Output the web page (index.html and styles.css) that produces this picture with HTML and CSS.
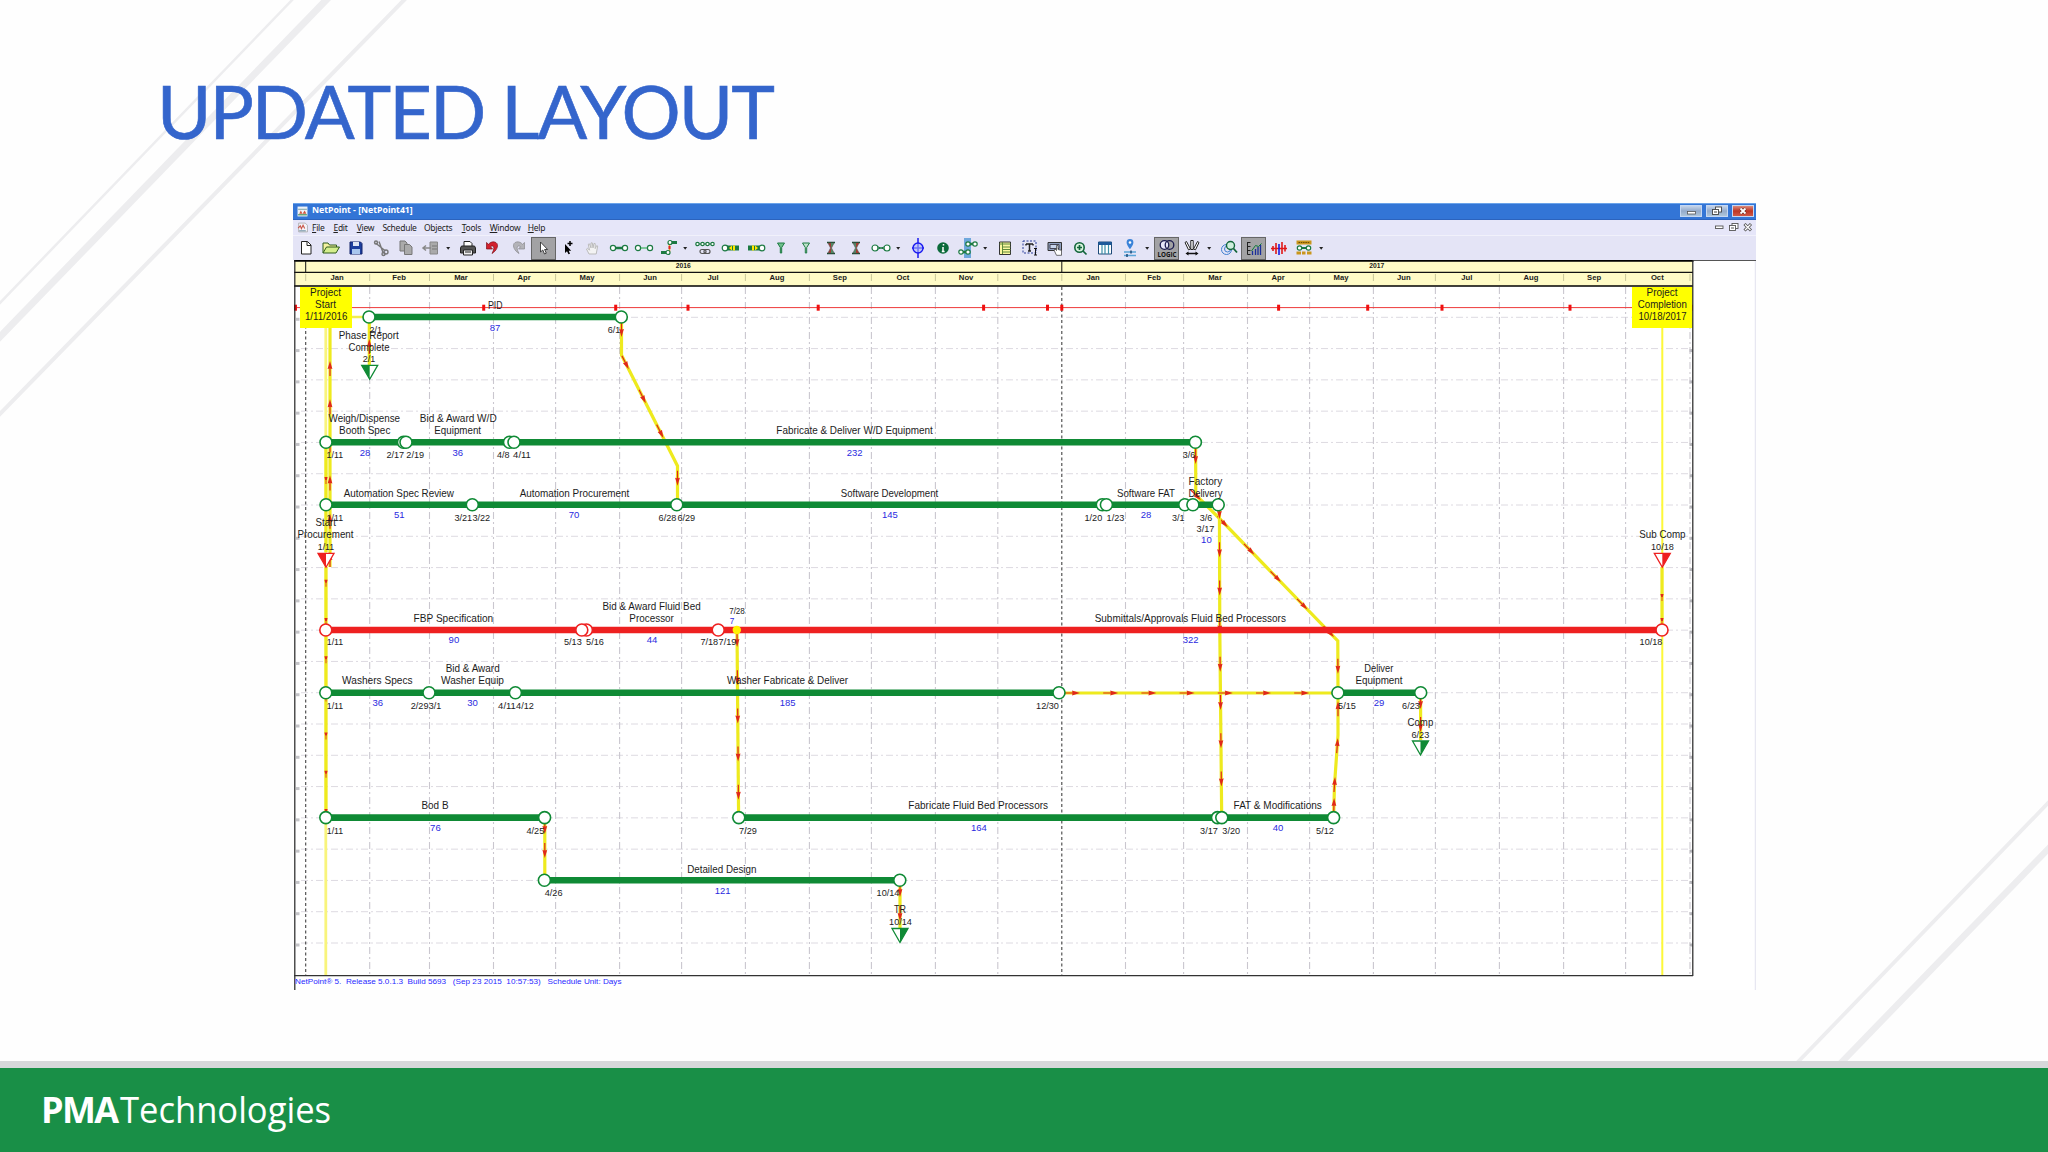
FILE: index.html
```html
<!DOCTYPE html>
<html lang="en">
<head>
    <meta charset="UTF-8">
    <meta name="viewport" content="width=device-width, initial-scale=1.0">
    <title>Updated Layout</title>
    <link rel="stylesheet" href="styles.css">
</head>
<body>
    <div class="slide">
        <svg class="decor" viewBox="0 0 2048 1061">
            <line x1="295" y1="-3" x2="-3" y2="306" stroke-width="2.5"/>
            <line x1="331" y1="-5" x2="-5" y2="342" stroke-width="7"/>
            <line x1="408" y1="-4" x2="-4" y2="418" stroke-width="4"/>
            <line x1="2051" y1="800" x2="1796" y2="1064" stroke-width="3.8"/>
            <line x1="2052" y1="845" x2="1838" y2="1066" stroke-width="6.5"/>
        </svg>

        <main class="content">
            <h1>UPDATED LAYOUT</h1>

            <div class="window">
                <div class="titlebar">
                    <svg class="app-icon" viewBox="0 0 10 10"><rect x=".5" y=".5" width="9" height="9" fill="#eef3fa"/><path d="M1 3h8" stroke="#8aa" /><path d="M2 7l1.500-3 1.500 3 2-3 1.500 3z" fill="#d2553c"/><path d="M1 8h8" stroke="#3b8a4a"/></svg>
                    <span class="title">NetPoint - [NetPoint41]</span>
                    <div class="win-buttons">
                        <span class="win-btn"><svg viewBox="0 0 22 12"><rect x="7.500" y="6.500" width="8" height="2.500" fill="#fff" stroke="#555" stroke-width=".8"/></svg></span>
                        <span class="win-btn"><svg viewBox="0 0 22 12"><rect x="9.500" y="2" width="6" height="5" fill="#fff" stroke="#444" stroke-width=".9"/><rect x="6.500" y="4.500" width="6" height="5" fill="#fff" stroke="#444" stroke-width=".9"/><path d="M8 7h3" stroke="#444"/></svg></span>
                        <span class="win-btn close"><svg viewBox="0 0 22 12"><path d="M8.500 3.500l5 5M13.500 3.500l-5 5" stroke="#5a2a20" stroke-width="3"/><path d="M8.500 3.500l5 5M13.500 3.500l-5 5" stroke="#fff" stroke-width="1.800"/></svg></span>
                    </div>
                </div>
                <div class="menubar">
                    <svg class="app-icon" viewBox="0 0 10 10"><path d="M1.500 1h6l2 2v6h-8z" fill="#f4f4fa" stroke="#999" stroke-width=".6"/><path d="M1 5.500l2-2 1 2.500 1.500-3 1.500 3" fill="none" stroke="#c9584a"/><path d="M2 8h6" stroke="#79a"/></svg>
                    <ul class="menu">
                        <li class="m-file"><u>F</u>ile</li>
                        <li class="m-edit"><u>E</u>dit</li>
                        <li class="m-view"><u>V</u>iew</li>
                        <li class="m-schedule">Schedule</li>
                        <li class="m-objects">Objects</li>
                        <li class="m-tools"><u>T</u>ools</li>
                        <li class="m-window"><u>W</u>indow</li>
                        <li class="m-help"><u>H</u>elp</li>
                    </ul>
                    <svg class="mdi-buttons" viewBox="0 0 40 12"><g fill="#fff" stroke="#555" stroke-width=".9"><rect x="1.500" y="5" width="7.500" height="2.500"/><rect x="18" y="2.500" width="6" height="5"/><rect x="15.500" y="4.500" width="6" height="5"/></g><path d="M17 7h3" stroke="#555"/><path d="M30.500 3l6.500 6.500M37 3l-6.500 6.500" stroke="#555" stroke-width="3"/><path d="M31 3.500l5.500 5.500M36.500 3.500l-5.500 5.500" stroke="#fff" stroke-width="1.300"/></svg>
                </div>
                <div class="toolbar" id="toolbar"></div>
                <svg class="chart" id="chart" viewBox="293 260 1463 730"></svg>
            </div>
        </main>

        <footer class="footer">
            <svg class="brand" viewBox="0 0 320 70">
                <text class="bold" x="8" y="45" textLength="78">PMA</text>
                <text class="thin" x="87" y="45" textLength="211" lengthAdjust="spacingAndGlyphs">Technologies</text>
            </svg>
        </footer>
    </div>
    <script src="script.js"></script>
</body>
</html>
```

FILE: styles.css
```css
body {
    margin: 0;
    background-color: #fefefe;
    font-family: "Liberation Sans", Arial, sans-serif;
    overflow: hidden;
}
.slide {
    position: relative;
    display: flex;
    flex-direction: column;
    width: 2048px;
    height: 1152px;
}
.decor {
    position: absolute;
    top: 0;
    left: 0;
    width: 2048px;
    height: 1061px;
}
.decor line {
    stroke: #ededef;
}
.content {
    position: relative;
    flex: 1;
    padding: 66px 292px 0 293px;
}
h1 {
    margin: 0 0 47px -136px;
    height: 90px;
    line-height: 90px;
    font-family: Lato, sans-serif;
    font-size: 74px;
    font-weight: 400;
    letter-spacing: -2px;
    white-space: nowrap;
    color: #3465cc;
    -webkit-text-stroke: 0.6px #3465cc;
}
.window {
    width: 1463px;
    background-color: #fff;
}
.titlebar {
    display: flex;
    align-items: center;
    box-sizing: border-box;
    height: 17px;
    padding: 0 2px 1px 4px;
    border-top: 1px solid #6aa3ea;
    border-bottom: 1px solid #2c63bd;
    background-color: #3375d6;
}
.app-icon {
    width: 11px;
    height: 11px;
}
.title {
    margin-left: 4px;
    padding-bottom: 2px;
    font-family: "Noto Sans", sans-serif;
    font-size: 8.7px;
    font-weight: 700;
    line-height: 12px;
    color: #fff;
}
.win-buttons {
    display: flex;
    gap: 4px;
    margin-left: auto;
}
.win-btn {
    width: 22px;
    height: 12px;
    background: linear-gradient(#cfdcee, #93aacb 50%, #b3cadc);
    outline: 1px solid #c4d7f3;
    outline-offset: -1px;
}
.win-btn svg {
    display: block;
}
.win-btn.close {
    background: linear-gradient(#e09a8c, #bd3624 50%, #d2604c);
}
.menubar {
    display: flex;
    align-items: center;
    height: 15px;
    padding: 0 2px 0 4px;
    background-color: #e6e6f9;
}
.menu {
    display: flex;
    margin: 0 0 0 4px;
    padding: 0 0 1px;
    list-style: none;
    font-family: "Noto Sans", sans-serif;
    font-size: 8.5px;
    letter-spacing: -0.25px;
    line-height: 13px;
    color: #222;
}
.m-file { width: 21.4px; }
.m-edit { width: 23.3px; }
.m-view { width: 25.7px; }
.m-schedule { width: 41.6px; }
.m-objects { width: 37.7px; }
.m-tools { width: 28px; }
.m-window { width: 38px; }
.mdi-buttons {
    width: 40px;
    height: 12px;
    margin: 0 0 1px auto;
}
.toolbar {
    display: flex;
    align-items: center;
    height: 25px;
    background-color: #e4e4f6;
    border-top: 1px solid #f1f1fb;
    box-sizing: border-box;
}
.tool {
    display: flex;
    align-items: center;
    justify-content: center;
    box-sizing: border-box;
    width: 25.15px;
    height: 23px;
}
.tool.pressed {
    background-color: #a2a2a4;
    border: 1px solid #666;
}
.tool svg {
    flex: none;
    width: 22px;
    height: 22px;
}
.arrow-down {
    width: 11.36px;
    height: 22px;
}
.chart {
    display: block;
    width: 1463px;
    height: 730px;
}
.chart text {
    font-size: 10.4px;
    fill: #1c1c1c;
    text-anchor: middle;
}
.chart text.num {
    fill: #2a2ae0;
}
.chart text.date {
    font-size: 9.6px;
}
.chart text.small {
    font-size: 8.2px;
}
.chart text.head {
    font-size: 7.7px;
    font-weight: 700;
}
.chart text.status {
    font-size: 8px;
    fill: #2a2aff;
    text-anchor: start;
    white-space: pre;
}
.footer {
    box-sizing: border-box;
    position: relative;
    height: 91px;
    padding: 10px 0 0 33px;
    border-top: 7px solid #d6d8da;
    background-color: #198f47;
}
.brand {
    display: block;
    width: 320px;
    height: 70px;
}
.brand text {
    font-family: "Open Sans", sans-serif;
    font-size: 36px;
    fill: #fff;
}
.brand .bold {
    font-weight: 700;
}
.brand .thin {
    font-weight: 400;
}
```

FILE: script.js
```js
const GREEN = '#0f8a35';
const RED = '#ee2020';

// ---------- toolbar ----------
const ring = (x, y, r = 2.6) => `<circle cx="${x}" cy="${y}" r="${r}" fill="#fff" stroke="#1c7a42" stroke-width="1.2"/>`;
const bar = (x1, x2, y, w = 2) => `<path d="M${x1} ${y}H${x2}" stroke="#1c7a42" stroke-width="${w}"/>`;
const funnel = '<path d="M7.500 6h7l-2.800 4.500v5.500h-1.400v-5.500z" fill="#6fc08c" stroke="#1c7a42"/>';
const glass = (a, b) => `<path d="M7 5.500h8M7 16.500h8" stroke="#1d4a30" stroke-width="1.500"/><path d="M8 6h6l-2.500 5 2.500 5h-6l2.500-5z" fill="${a}" stroke="#555" stroke-width=".6"/><path d="M11 11l3 5h-3zM11 6h3l-3 5z" fill="${b}"/>`;

const tools = [
    { svg: '<path d="M6.500 4.500h6l3.500 3.500v9h-9.500z" fill="#fff" stroke="#222"/><path d="M12 4.500v4h4" fill="none" stroke="#222"/>' },
    { svg: '<path d="M3 16v-10h5l1.500 2h7v2" fill="#f5f2a0" stroke="#2f5d1c"/><path d="M3 16l3.500-6h13l-3.500 6z" fill="#d4ee8c" stroke="#2f5d1c"/>' },
    { svg: '<path d="M5 5h10.500l1.500 1.500v10.500h-12z" fill="#1d3f9e" stroke="#14246a"/><path d="M8 5h6v4h-6z" fill="#dfe6f5"/><path d="M7 12h8v5h-8z" fill="#a9c6ee"/>' },
    { svg: '<g fill="none" stroke="#777" stroke-width="1.400"><path d="M5.500 6l10 8M9 4.500l4 11"/><circle cx="6" cy="5.500" r="1.500"/><circle cx="16" cy="15" r="2"/><circle cx="13.500" cy="17" r="1.500"/></g>' },
    { svg: '<path d="M5 4h5l2 2v8h-7z" fill="#aaa" stroke="#777"/><path d="M9.500 7.500h5l2.500 2.500v7.500h-7.500z" fill="#aaa" stroke="#777"/>' },
    { svg: '<path d="M10 5h7.500v12h-7.500z" fill="#aaa" stroke="#888"/><path d="M3 11h8M6 8.500l-3 2.500 3 2.500M12 9h5M12 12h5" fill="none" stroke="#888" stroke-width="1.500"/>', drop: true },
    { svg: '<path d="M7 9v-4.500h6l2 2v2.500" fill="#fff" stroke="#222"/><path d="M4.500 9h13l1 2v5h-15v-5z" fill="#555" stroke="#222"/><path d="M6.500 13h9v5h-9z" fill="#eee" stroke="#222"/><path d="M8 15h6" stroke="#222"/>' },
    { svg: '<path d="M4.500 5.500v6.500h6l-2-2.300c3-2.200 5 .5 1.500 6.800 6-3.500 7.500-10.500 2.500-11.500-2.500-.5-4.500.5-6 2.300z" fill="#d3202c" stroke="#7c1018" stroke-width=".7"/>' },
    { svg: '<path d="M17.500 5.500v6.500h-6l2-2.300c-3-2.200-5 .5-1.500 6.800-6-3.500-7.500-10.500-2.500-11.500 2.500-.5 4.500.5 6 2.300z" fill="#b3b3b8" stroke="#88888c" stroke-width=".7"/>' },
    { svg: '<path d="M8.500 5v10l2.300-2 1.700 4 1.800-.8-1.700-3.700h3z" fill="#fff" stroke="#333" stroke-width=".9"/>', pressed: true },
    { svg: '<path d="M8 7v9l2-1.700 1.500 3 1.500-.6-1.300-3h2.500z" fill="#000"/><path d="M10.500 6.500h5M13 4v5" stroke="#000" stroke-width="1.500"/>' },
    { svg: '<path d="M7 17l-2.500-5 1-.8 2 2-1.200-6 1.200-.3 1.500 4v-5h1.300l.7 5 1-4.500 1.200.2v5l1.500-3 1 .4-1.500 8z" fill="#f3f3f3" stroke="#bbb"/>' },
    { svg: bar(5, 17, 11, 2.5) + ring(5, 11) + ring(17, 11) },
    { svg: '<path d="M5 11h12" stroke="#7fc79a" stroke-width="2"/>' + ring(5, 11) + ring(17, 11) },
    { svg: '<path d="M11.500 5.500v9.500" stroke="#e8a020" stroke-width="1.500"/><path d="M11.500 9v3" stroke="#d22" stroke-width="2"/>' + bar(13, 19, 5.5, 3) + bar(3, 9, 15.5, 3) + ring(12, 5.5, 2) + ring(10, 15.5, 2), drop: true },
    { svg: bar(2, 20, 7, 1) + ring(3.5, 7, 1.7) + ring(8.5, 7, 1.7) + ring(13.5, 7, 1.7) + ring(18.5, 7, 1.7) + '<g fill="none" stroke="#555" stroke-width="1.200"><rect x="6" y="12.500" width="6" height="4" rx="2"/><rect x="10" y="12.500" width="6" height="4" rx="2"/></g>' },
    { svg: bar(6, 19, 11, 5) + '<path d="M9 11l3-2.500v5z" fill="#ffe800"/>' + '<path d="M13 8.500h2v5h-2z" fill="#ffe800"/>' + ring(5, 11, 2.8) },
    { svg: bar(3, 16, 11, 5) + '<path d="M7 8.500h2v5h-2z" fill="#ffe800"/><path d="M13 11l-3-2.500v5z" fill="#ffe800"/>' + ring(17, 11, 2.8) },
    { svg: funnel },
    { svg: '<path d="M7.500 6h7l-2.800 4.500v5.500h-1.400v-5.500z" fill="#bfe3cb" stroke="#1c7a42"/>' },
    { svg: glass('#a33a30', '#4f8a66') },
    { svg: glass('#4f8a66', '#a33a30') },
    { svg: '<path d="M5 9l12 4M5 13l12-4" stroke="#1c7a42"/>' + ring(5, 11, 3) + ring(17, 11, 3), drop: true },
    { svg: '<path d="M11 1v20M5 11h12" stroke="#1a1af0" stroke-width="1.500"/><circle cx="11" cy="11" r="5" fill="#aab4fa" fill-opacity=".6" stroke="#1a1af0" stroke-width="1.400"/>' },
    { svg: '<circle cx="11" cy="11" r="5.800" fill="#0b6a3a"/><path d="M11.500 7v1.500M11 10v4.500M9.800 14.500h2.800" stroke="#fff" stroke-width="1.500"/>' },
    { svg: '<path d="M7 1h7v20h-7z" fill="#6fa8dc"/>' + bar(10, 18, 7, 2.5) + bar(3, 11, 15, 2.5) + ring(11, 7, 2.2) + ring(18, 7, 2.2) + ring(4, 15, 2.2) + ring(11, 15, 2.2), drop: true },
    { svg: '<path d="M5.500 5h11v12.500h-11z" fill="#fbf7a0" stroke="#333"/><path d="M5.500 7h11M8.500 10h8M8.500 12.500h8M8.500 15h8" stroke="#5f8a3a"/><path d="M8.500 5v12" stroke="#5f8a3a"/>' },
    { svg: '<rect x="4" y="4" width="13" height="12" fill="none" stroke="#2a3f9a" stroke-dasharray="2 1.500"/><path d="M7 7h7M10.500 7v7M9 14h3M7 7v1.500M14 7v1.500" stroke="#222" stroke-width="1.500"/><path d="M15 11.500h3M16.500 11.500v6.500M15 18h3" stroke="#111"/>' },
    { svg: '<path d="M4 5.500h13.500v8h-13.500z" fill="#8f9fbe" stroke="#333"/><path d="M6 7.500h9v4h-9z" fill="#c8d4ec" stroke="#445"/><path d="M10 13l1-1 1.500 1.500v-5h1.500v4l3.500.8v5h-5z" fill="#fff" stroke="#333" stroke-width=".7"/>' },
    { svg: '<circle cx="10.500" cy="10.500" r="4.700" fill="#d7f3dd" stroke="#11653a" stroke-width="1.600"/><path d="M8 10.500h5M10.500 8v5M14 14l3.500 3.500" stroke="#11653a" stroke-width="1.700"/>' },
    { svg: '<path d="M4.500 5h13v12h-13z" fill="#fff" stroke="#1d4a78"/><path d="M4.500 5h13v3h-13z" fill="#1d5a9a"/><path d="M8 8v9M11 8v9M14.500 8v9" stroke="#3b8fa8" stroke-width="1.200"/>' },
    { svg: '<path d="M11 2a3.400 3.400 0 0 0-3.400 3.400c0 2.500 3.400 6.600 3.400 6.600s3.400-4 3.400-6.600a3.400 3.400 0 0 0-3.400-3.400z" fill="#3a83d8"/><circle cx="11" cy="5.500" r="1.300" fill="#fff"/><path d="M5 15h12M5 18.500h12" stroke="#58a4d8" stroke-width="1.500"/><path d="M12 13.500v3M8 17v3" stroke="#1d4a78" stroke-width="1.500"/>', drop: true },
    { svg: '<g fill="#e6e6fa" stroke="#1b1b50" stroke-width="1.300"><circle cx="8.500" cy="8" r="4.300"/><circle cx="13.500" cy="8" r="4.300" fill="none"/></g><text x="11" y="20" font-size="6.200" font-weight="700" text-anchor="middle" textLength="19" lengthAdjust="spacingAndGlyphs" font-family="Open Sans, sans-serif" fill="#111">LOGIC</text>', pressed: true },
    { svg: '<g fill="#fff" stroke="#222" stroke-width="1"><path d="M4 5.500l1.500-1 4 7.500-2 .8zM9.800 3.500h2.400v9h-2.400zM18 5.500l-1.500-1-4 7.500 2 .8z"/></g><path d="M6 16.500h10" stroke="#111" stroke-width="1.500"/><path d="M4.500 16.500l3-2v4zM17.500 16.500l-3-2v4z" fill="#111"/>', drop: true },
    { svg: '<g fill="none" stroke="#3f7fd0"><circle cx="8.500" cy="12.500" r="5"/><circle cx="9.500" cy="12" r="3"/></g><circle cx="12.500" cy="8.500" r="4" fill="#cfeedd" stroke="#11653a" stroke-width="1.400"/><path d="M15.500 11.500l3.500 4" stroke="#11653a" stroke-width="1.800"/>' },
    { svg: '<path d="M4.500 5v12.500M4.500 5.500h3M4.500 9.500h3M4.500 13.500h3M4.500 17.500h3" stroke="#222"/><path d="M9.500 18v-4M12.500 18v-6M15 18v-8M17.500 18v-10" stroke="#1a2e9a" stroke-width="1.300"/><path d="M8.500 14l4-5.500 3 1 3-3" fill="none" stroke="#0b7a3a"/>', pressed: true },
    { svg: '<path d="M3 11.500h16" stroke="#e01818" stroke-width="1.500"/><path d="M5 9v5M8 6v11M14 5v12M17 8v6.500" stroke="#e01818" stroke-width="1.600"/><path d="M11 7v11" stroke="#1a1ae0" stroke-width="1.600"/>' },
    { svg: '<path d="M3.500 3.500h15v4h-15zM3.500 14.500h4.500v3h-4.500zM14 14.500h4.500v3h-4.500zM9 14.500h3.500v3h-3.500z" fill="#c9961c"/><path d="M5.500 5.500h11" stroke="#6a4c08" stroke-dasharray="1.500 .8"/>' + bar(6, 16, 11) + ring(6.5, 11, 2.2) + ring(15.5, 11, 2.2), drop: true }
];

document.getElementById('toolbar').innerHTML = tools.map(t =>
    `<span class="tool${t.pressed ? ' pressed' : ''}"><svg viewBox="0 0 22 22">${t.svg}</svg></span>` +
    (t.drop ? '<svg class="arrow-down" viewBox="0 0 11 22"><path d="M2 10h4l-2 2.800z" fill="#222"/></svg>' : '')
).join('');

// ---------- chart ----------
const out = [];
const months = ['Jan', 'Feb', 'Mar', 'Apr', 'May', 'Jun', 'Jul', 'Aug', 'Sep', 'Oct', 'Nov', 'Dec'];
const bounds = [305.7, 369.7, 429.5, 493.5, 555.6, 619.6, 681.6, 745.4, 809.4, 871.4, 935.4, 997.8, 1061.8, 1125.5, 1183.6, 1247.5, 1309.6, 1373.4, 1435.4, 1499.4, 1563.6, 1625.6, 1690];

function text(str, x, y, w, cls) {
    out.push(`<text x="${x}" y="${y}" class="${cls || ''}"${w ? ` textLength="${w}" lengthAdjust="spacingAndGlyphs"` : ''}>${str.replace(/&/g, '&amp;')}</text>`);
}
function line(x1, y1, x2, y2, color, width, dash) {
    out.push(`<line x1="${x1}" y1="${y1}" x2="${x2}" y2="${y2}" stroke="${color}" stroke-width="${width}"${dash ? ` stroke-dasharray="${dash}"` : ''}/>`);
}
function rect(x, y, w, h, color) {
    out.push(`<rect x="${x}" y="${y}" width="${w}" height="${h}" fill="${color}"/>`);
}

// grid
for (let i = 0; i < 21; i++) {
    const y = 317.3 + i * 31.285;
    line(301, y, 1690, y, '#dddae1', 1, '7 3 2 3');
    rect(296, y + 0.5, 3.5, 3, '#c4c4c8');
    rect(1689.5, y + 0.5, 3, 3, '#b4b4b8');
}
bounds.forEach((x, i) => {
    if (i === 0 || i === 12) {
        line(x, 287, x, 975, '#444', 1.1, '3 2.5');
    } else {
        line(x, 287, x, 975, '#cac7cf', 1.1, '7 3 2 3');
    }
});

// calendar header
rect(295, 261, 1397.5, 25, '#fffbc6');
line(294, 260.9, 1693.5, 260.9, '#000', 1.6);
line(1693, 260.5, 1756, 260.5, '#555', 1);
line(294, 272.4, 1693, 272.4, '#111', 1.3);
line(294, 286, 1693, 286, '#000', 1.5);
line(305.7, 261, 305.7, 272, '#111', 1);
line(1061.8, 261, 1061.8, 272, '#111', 1);
bounds.forEach((x, i) => {
    line(x, 274, x, 281, '#c9c79a', 1);
    if (i < 22) text(months[i % 12], (x + bounds[i + 1]) / 2 - 0.5, 279.8, 0, 'head');
});
text('2016', 683.3, 267.5, 15, 'head');
text('2017', 1376.7, 267.5, 15, 'head');

// calendar exceptions line
line(295, 307.6, 1692, 307.6, '#ee3a3a', 1);
[295.5, 483.7, 615.7, 688, 818.2, 983.6, 1047.5, 1061.8, 1278.6, 1367.7, 1442, 1570, 1691.5].forEach(x => rect(x - 1.5, 304.7, 3, 6, '#f01010'));

// start and finish lines
line(325.8, 328, 325.8, 975, '#f8f47c', 2.8);
line(1662.3, 328, 1662.3, 975, '#fdf838', 2);
line(352, 317, 369, 317, '#f2ee50', 2.5);

// links: points and the distance of every arrow tip from the first point
const every = (from, to) => {
    const d = [];
    for (let v = from; v <= to; v += 38.2) d.push(v);
    return d;
};
const links = [
    { p: [[326, 817], [326, 567]], at: every(8, 250), thin: true },
    { p: [[326, 505], [326, 552]], at: [] },
    { p: [[330, 567], [330, 328]], at: every(15, 225) },
    { p: [[326, 505], [326, 442]], at: [28], thin: true },
    { p: [[369.3, 365], [369.3, 317]], at: [26] },
    { p: [[621.5, 317], [621.5, 355], [677.5, 466], [677.5, 504]], at: [20, 54, 92, 131, 182] },
    { p: [[1195.6, 442], [1195.8, 495], [1219, 518], [1337.8, 641], [1338, 693]], at: every(22, 290) },
    { p: [[1219.4, 504], [1219.8, 630], [1221.7, 817]], at: every(15, 290) },
    { p: [[1059, 693], [1338, 693]], at: every(21, 260) },
    { p: [[1333.6, 817], [1334.5, 785], [1338, 735], [1338, 693]], at: [19, 40, 79, 116] },
    { p: [[737, 630], [738.6, 817]], at: every(17, 180) },
    { p: [[544.8, 817], [544.8, 880]], at: [17, 41] },
    { p: [[900, 880], [900, 928]], at: [17, 41] },
    { p: [[1420.6, 693], [1420.6, 740]], at: [16, 39] },
    { p: [[1662, 630], [1662, 567]], at: [12, 36], thin: true }
];
links.forEach(l => {
    out.push(`<polyline points="${l.p.join(' ')}" fill="none" stroke="#eeea1e" stroke-width="3.2"/>`);
    l.at.forEach(d => {
        for (let i = 1; i < l.p.length; i++) {
            const [x1, y1] = l.p[i - 1];
            const [x2, y2] = l.p[i];
            const len = Math.hypot(x2 - x1, y2 - y1);
            if (d <= len) {
                const x = x1 + (x2 - x1) * d / len;
                const y = y1 + (y2 - y1) * d / len;
                const a = Math.atan2(y2 - y1, x2 - x1) * 180 / Math.PI;
                const shape = l.thin ? 'M0 -1.6L-3 -.8V.8L0 1.600zM-3 -.4h-4v.8h4z' : 'M0 0L-8 -2.400L-7.500 -.6H-15V.6H-7.500L-8 2.400z';
                out.push(`<path d="${shape}" transform="translate(${x} ${y}) rotate(${a})" fill="#e0281a"/>`);
                break;
            }
            d -= len;
        }
    });
});

// activities: row y, colour, bar segments, nodes (last one on top)
const rows = [
    [317, GREEN, [[369, 621]], [369, 621.3]],
    [442.2, GREEN, [[326, 1195]], [326, 403.5, 406, 509.5, 514, 1195.4]],
    [504.8, GREEN, [[326, 1218]], [326, 472.3, 676.8, 1102.3, 1106.4, 1184.8, 1192.9, 1218.2]],
    [630, RED, [[326, 1662]], [325.8, 586.4, 581.8, 718.2, 1662]],
    [692.8, GREEN, [[326, 1059], [1338, 1420]], [325.8, 429, 515.4, 1059, 1337.9, 1420.7]],
    [817.6, GREEN, [[326, 544], [739, 1333]], [325.8, 544.6, 738.8, 1217.5, 1221.8, 1333.6]],
    [880.3, GREEN, [[544, 900]], [544.4, 899.8]]
];
rows.forEach(([y, color, bars, nodes]) => {
    bars.forEach(([a, b]) => line(a, y, b, y, color, 6.6));
    nodes.forEach(x => out.push(`<circle cx="${x}" cy="${y}" r="6" fill="#fff" stroke="${color}" stroke-width="1.600"/>`));
});
out.push('<circle cx="736.800" cy="630" r="4.200" fill="#fff200"/>');

// milestones
function milestone(x, y, color, side) {
    out.push(`<path d="M${x - 8} ${y}h16l-8 14z" fill="#fff" stroke="${color}" stroke-width="1.300"/>`);
    out.push(`<path d="M${x} ${y}h${side * 8}L${x} ${y + 14}z" fill="${color}"/>`);
}
milestone(369.7, 365.3, GREEN, -1);
milestone(326, 553.3, RED, -1);
milestone(1662.3, 553.3, RED, 1);
milestone(900, 928.5, GREEN, 1);
milestone(1420.5, 741, GREEN, 1);

// project start and completion
rect(300, 287, 52, 41, '#ffff00');
rect(1632, 287, 60.5, 41, '#ffff00');

const labels = [
    ['Project', 325.5, 295.8, 31], ['Start', 325.5, 308, 21], ['1/11/2016', 326.2, 320, 42.5],
    ['Project', 1662, 295.8, 31], ['Completion', 1662.3, 308, 49], ['10/18/2017', 1662.5, 320, 48],
    ['PID', 495.3, 308.8, 14.5], ['Phase Report', 368.8, 338.5, 60], ['Complete', 369, 350.6, 41],
    ['Weigh/Dispense', 364.3, 422, 71.5], ['Booth Spec', 364.7, 434.2, 51.3],
    ['Bid & Award W/D', 458.2, 422, 77], ['Equipment', 457.7, 434.2, 46.7],
    ['Fabricate & Deliver W/D Equipment', 854.6, 434.2, 156.5],
    ['Automation Spec Review', 398.8, 496.6, 110.3], ['Automation Procurement', 574.5, 496.6, 109.7],
    ['Software Development', 889.5, 496.6, 97.5], ['Software FAT', 1146, 496.6, 58],
    ['Factory', 1205.4, 484.8, 33.6], ['Delivery', 1205.4, 496.8, 34],
    ['Start', 325.8, 525.7, 20.5], ['Procurement', 325.5, 537.8, 56],
    ['FBP Specification', 453.4, 621.8, 79.6], ['Bid & Award Fluid Bed', 651.6, 609.8, 98.2], ['Processor', 651.6, 621.8, 44.6],
    ['Submittals/Approvals Fluid Bed Processors', 1190.3, 621.8, 191.3], ['Sub Comp', 1662.4, 538, 46.3],
    ['Washers Specs', 377.3, 684.4, 70.4], ['Bid & Award', 472.7, 672, 54], ['Washer Equip', 472.5, 684.4, 63],
    ['Washer Fabricate & Deliver', 787.5, 684.4, 121], ['Deliver', 1378.8, 672, 29], ['Equipment', 1379, 684.4, 47],
    ['Comp', 1420.4, 726.2, 25.7], ['Bod B', 435, 809.4, 27],
    ['Fabricate Fluid Bed Processors', 978.2, 809.4, 139.7], ['FAT & Modifications', 1277.7, 809.4, 88.2],
    ['Detailed Design', 721.8, 872.6, 69.3], ['TR', 900, 913.4, 12]
];
labels.forEach(l => text(...l));

const durations = [
    [87, 495, 330.7], [28, 365, 455.7], [36, 457.7, 455.7], [232, 854.6, 455.7], [51, 399.2, 518], [70, 574, 518],
    [145, 889.8, 518], [28, 1146, 518], [10, 1206.4, 543.2], [90, 453.9, 643], [44, 652.1, 643],
    [322, 1190.6, 643], [36, 377.7, 706.3], [30, 472.5, 706.3], [185, 787.7, 706.3], [29, 1379, 706.3],
    [76, 435.4, 831], [164, 979, 831], [40, 1278, 831], [121, 722.7, 893.8]
];
durations.forEach(([n, x, y]) => text(String(n), x, y, n > 99 ? 15.8 : 10.6, 'num date'));

const dates = [
    ['2/1', 375.8, 333], ['2/1', 369, 361.8], ['6/1', 614, 333],
    ['1/11', 334.8, 458], ['2/17', 395.3, 458], ['2/19', 415.2, 458], ['4/8', 503.2, 458], ['4/11', 522, 458], ['3/6', 1189, 458],
    ['1/11', 334.8, 520.5], ['3/21', 463.3, 520.5], ['3/22', 481.3, 520.5], ['6/28', 667.5, 520.5], ['6/29', 686.3, 520.5],
    ['1/20', 1093.4, 520.5], ['1/23', 1115.5, 520.5], ['3/1', 1178.2, 520.5], ['3/6', 1205.9, 520.5], ['3/17', 1205.5, 532.2],
    ['1/11', 326, 549.5], ['10/18', 1662.4, 549.5],
    ['1/11', 335, 645.2], ['5/13', 572.9, 645.2], ['5/16', 595, 645.2], ['7/18', 709.3, 645.2], ['7/19', 727.5, 645.2], ['10/18', 1651, 645.2],
    ['1/11', 335, 708.7], ['2/29', 419.6, 708.7], ['3/1', 435, 708.7], ['4/11', 507, 708.7], ['4/12', 525, 708.7],
    ['12/30', 1047.5, 708.7], ['5/15', 1347, 708.7], ['6/23', 1411, 708.7], ['6/23', 1420.4, 738],
    ['1/11', 335, 833.5], ['4/25', 535.4, 833.5], ['7/29', 748, 833.5], ['3/17', 1209, 833.5], ['3/20', 1231.2, 833.5], ['5/12', 1325, 833.5],
    ['4/26', 553.6, 896], ['10/14', 888, 896], ['10/14', 900.5, 925]
];
dates.forEach(([d, x, y]) => text(d, x, y, [0, 0, 0, 12.5, d === '1/11' ? 16.5 : 17.8, 22.8][d.length], 'date'));
text('7/28', 737, 614.2, 15.7, 'small');
text('7', 732, 623.6, 0, 'num small');

// frame and status line
line(294.8, 260, 294.8, 990, '#222', 1.2);
line(1692.8, 260, 1692.8, 976, '#222', 1.2);
line(294, 975.6, 1693, 975.6, '#333', 1.2);
line(1755.3, 261, 1755.3, 990, '#e2e2ee', 1);
text('NetPoint® 5.  Release 5.0.1.3  Build 5693   (Sep 23 2015  10:57:53)   Schedule Unit: Days', 295, 983.6, 326.5, 'status');

document.getElementById('chart').innerHTML = out.join('');
```
